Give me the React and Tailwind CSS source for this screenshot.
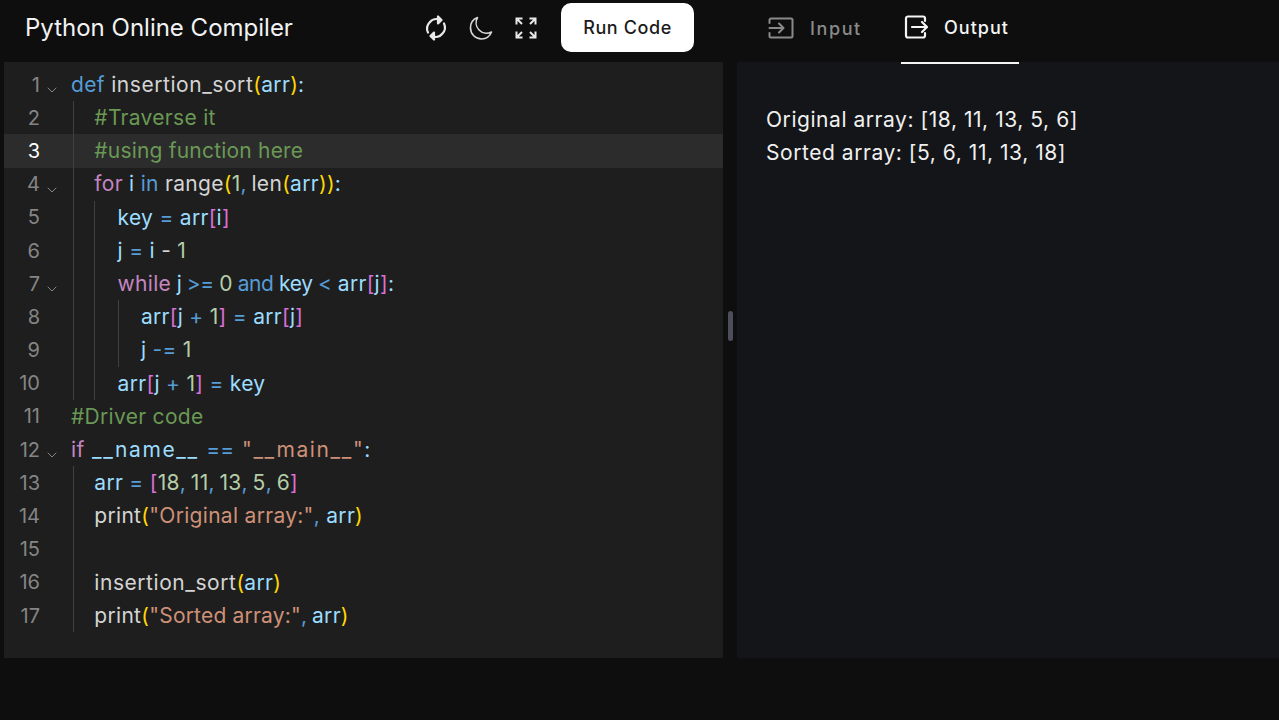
import React from 'react';
import { ChevronDown } from 'lucide-react';

const c = {
    kw: 'text-[#569cd6]',
    ctl: 'text-[#c586c0]',
    fn: 'text-[#d4d4d4]',
    v: 'text-[#9cdcfe]',
    y: 'text-[#ffd700]',
    p: 'text-[#da70d6]',
    n: 'text-[#b5cea8]',
    s: 'text-[#ce9178]',
    g: 'text-[#6a9955]',
    o: 'text-[#d4d4d4]',
};

// the reference font runs wider on names and tighter on spaces and operators
const tight = 'tracking-[-0.4px]';
const comma = `${c.kw} tracking-[-0.5px]`;
const wide = 'tracking-[0.55px]';
const dunder = 'tracking-[1.6px]';

const lines = [
    { fold: true, indent: 0, t: [['def', c.kw], [' insertion_sort', `${c.fn} ${wide}`], ['(', c.y], ['arr', c.v], [')', c.y], [':', c.v]] },
    { indent: 1, t: [['#Traverse it', c.g]] },
    { indent: 1, active: true, t: [['#using function here', `${c.g} tracking-[0.2px]`]] },
    { fold: true, indent: 1, t: [['for', c.ctl], [' i ', c.v], ['in', c.kw], [' range', c.fn], ['(', c.y], ['1', c.n], [', ', comma], ['len', c.fn], ['(', c.y], ['arr', c.v], ['))', c.y], [':', c.v]] },
    { indent: 2, t: [['key', c.v], [' = ', c.kw], ['arr', c.v], ['[', c.p], ['i', c.v], [']', c.p]] },
    { indent: 2, t: [['j', c.v], [' = ', c.kw], ['i', c.v], [' - ', c.o], ['1', c.n]] },
    { fold: true, indent: 2, t: [['while', c.ctl], [' j ', `${c.v} ${tight}`], ['>=', `${c.kw} ${tight}`], [' 0 ', `${c.n} ${tight}`], ['and', `${c.kw} ${tight}`], [' key ', `${c.v} ${tight}`], ['<', `${c.kw} ${tight}`], [' arr', c.v], ['[', c.p], ['j', c.v], [']', c.p], [':', c.v]] },
    { indent: 3, t: [['arr', c.v], ['[', c.p], ['j ', c.v], ['+', c.kw], [' 1', c.n], [']', c.p], [' = ', c.kw], ['arr', c.v], ['[', c.p], ['j', c.v], [']', c.p]] },
    { indent: 3, t: [['j', c.v], [' -= ', c.kw], ['1', c.n]] },
    { indent: 2, t: [['arr', c.v], ['[', c.p], ['j ', c.v], ['+', c.kw], [' 1', c.n], [']', c.p], [' = ', c.kw], ['key', c.v]] },
    { indent: 0, t: [['#Driver code', c.g]] },
    { fold: true, indent: 0, t: [['if', c.ctl], [' __name__ ', `${c.v} ${dunder}`], ['==', c.kw], [' "__main__"', `${c.s} ${dunder}`], [':', c.v]] },
    { indent: 1, t: [['arr', c.v], [' = ', c.kw], ['[', c.p], ['18', c.n], [', ', comma], ['11', c.n], [', ', comma], ['13', c.n], [', ', comma], ['5', c.n], [', ', comma], ['6', c.n], [']', c.p]] },
    { indent: 1, t: [['print', c.fn], ['(', c.y], ['"Original array:"', c.s], [', ', c.kw], ['arr', c.v], [')', c.y]] },
    { indent: 1, t: [] },
    { indent: 1, t: [['insertion_sort', `${c.fn} ${wide}`], ['(', c.y], ['arr', c.v], [')', c.y]] },
    { indent: 1, t: [['print', c.fn], ['(', c.y], ['"Sorted array:"', `${c.s} tracking-[0.2px]`], [', ', comma], ['arr', c.v], [')', c.y]] },
];

const CodeLine = ({ line, num }) => (
    <div className={`flex h-[33.2px] items-center ${line.active ? 'bg-[#2c2c2c]' : ''}`}>
        <span className={`w-[36px] text-right text-[20px] ${line.active ? 'text-white' : 'text-[#858585]'}`}>{num}</span>
        <span className="flex w-[31px] pl-[4px] pt-[11px]">
            {line.fold && <ChevronDown size={16} strokeWidth={1.5} className="text-[#858585]" />}
        </span>
        <div className="flex h-full items-center whitespace-pre text-[21px] tracking-[0.3px]">
            {Array.from({ length: line.indent }).map((_, i) => (
                <span key={i} className={`h-full w-[23.3px] border-l border-[#404040] ${i === 0 ? 'ml-[2px] -mr-[2px]' : ''}`} />
            ))}
            {line.t.map(([text, color], i) => (
                <span key={i} className={color}>{text}</span>
            ))}
        </div>
    </div>
);

const App = () => {
    return (
        <div className="flex h-[720px] w-[1279px] flex-col overflow-hidden bg-[#0e0e0e] font-['Inter',sans-serif] text-white">
            <header className="relative z-10 flex h-[62px] shrink-0 items-start">
                <div className="flex w-[737px] items-center pt-[3px]">
                    <h1 className="ml-[25px] w-[399px] text-[24px] font-normal text-[#f2f2f2]">Python Online Compiler</h1>
                    <div className="flex items-center gap-[21px] text-[#e8e8e8]">
                        <svg width="24" height="26" viewBox="0 0 24 26" fill="none" stroke="currentColor" strokeWidth="2.2" strokeLinecap="round" strokeLinejoin="round">
                            <path d="M4 17.5a9 9 0 0 1 1.5-10A8.5 8.5 0 0 1 16 5" />
                            <path d="M20 8.5a9 9 0 0 1-1.5 10A8.5 8.5 0 0 1 8 21" />
                            <path d="M14 1.5v7l3.5-3.5z" fill="currentColor" />
                            <path d="M10 24.5v-7L6.5 21z" fill="currentColor" />
                        </svg>
                        <svg width="24" height="24" viewBox="0 0 24 24" fill="none" stroke="#d8d8d8" strokeWidth="1.6" strokeLinejoin="round">
                            <path d="M8.5 1.5a10.5 10.5 0 0 0 14 14.5A11 11 0 0 1 12.5 23 11 11 0 0 1 1.5 12 11 11 0 0 1 8.5 1.5z" />
                        </svg>
                        <svg width="24" height="24" viewBox="0 0 24 24" fill="none" stroke="currentColor" strokeWidth="2">
                            <path d="M2.5 8.5v-6h6M2.5 2.5l5.5 5.5M21.5 8.5v-6h-6M21.5 2.5L16 8M2.5 15.5v6h6M2.5 21.5L8 16M21.5 15.5v6h-6M21.5 21.5L16 16" />
                        </svg>
                        <button className="ml-[2px] flex h-[49px] w-[133px] items-center justify-center rounded-[10px] bg-white text-[18px] font-medium tracking-[0.6px] text-[#1c1c1c]">Run Code</button>
                    </div>
                </div>
                <div className="flex h-[64px] items-stretch pl-[18px]">
                    <div className="flex w-[146px] items-center gap-[15px] pl-[13px] pb-[8px] text-[#8a8a8a]">
                        <svg width="26" height="22" viewBox="0 0 26 22" fill="none" stroke="currentColor" strokeWidth="2" strokeLinecap="round" strokeLinejoin="round">
                            <path d="M1.5 6V3a1.5 1.5 0 0 1 1.5-1.5h20A1.5 1.5 0 0 1 24.5 3v16a1.5 1.5 0 0 1-1.5 1.5H3A1.5 1.5 0 0 1 1.5 19v-3" />
                            <path d="M1.5 11h14M11 6.5l4.5 4.5-4.5 4.5" />
                        </svg>
                        <span className="ml-[1px] text-[18px] font-medium tracking-[1.6px]">Input</span>
                    </div>
                    <div className="flex w-[118px] items-center gap-[16px] border-b-[2px] border-[#f5f5f5] pl-[3px] pb-[8px] text-[#f5f5f5]">
                        <svg width="24" height="24" viewBox="0 0 24 24" fill="none" stroke="currentColor" strokeWidth="2.2" strokeLinecap="round" strokeLinejoin="round">
                            <path d="M21 6V3.5A2 2 0 0 0 19 1.5H4a2 2 0 0 0-2 2v17a2 2 0 0 0 2 2h15a2 2 0 0 0 2-2V18" />
                            <path d="M8 12h15M18 7l5 5-5 5" />
                        </svg>
                        <span className="text-[18px] font-medium tracking-[1px]">Output</span>
                    </div>
                </div>
            </header>
            <main className="flex h-[596px] shrink-0 pl-[4px]">
                <section className="w-[719px] bg-[#1e1e1e] pt-[6px]">
                    {lines.map((line, i) => (
                        <CodeLine key={i} line={line} num={i + 1} />
                    ))}
                </section>
                <div className="flex w-[14px] items-center justify-center pb-[68px]">
                    <div className="h-[30px] w-[5px] rounded-full bg-[#4d4d5c]" />
                </div>
                <section className="flex-1 bg-[#141518] pl-[29px] pt-[41px] text-[21px] leading-[33.2px] tracking-[0.55px] text-[#f0f0f0]">
                    <p>Original array: [18, 11, 13, 5, 6]</p>
                    <p>Sorted array: [5, 6, 11, 13, 18]</p>
                </section>
            </main>
        </div>
    );
};

export default App;
